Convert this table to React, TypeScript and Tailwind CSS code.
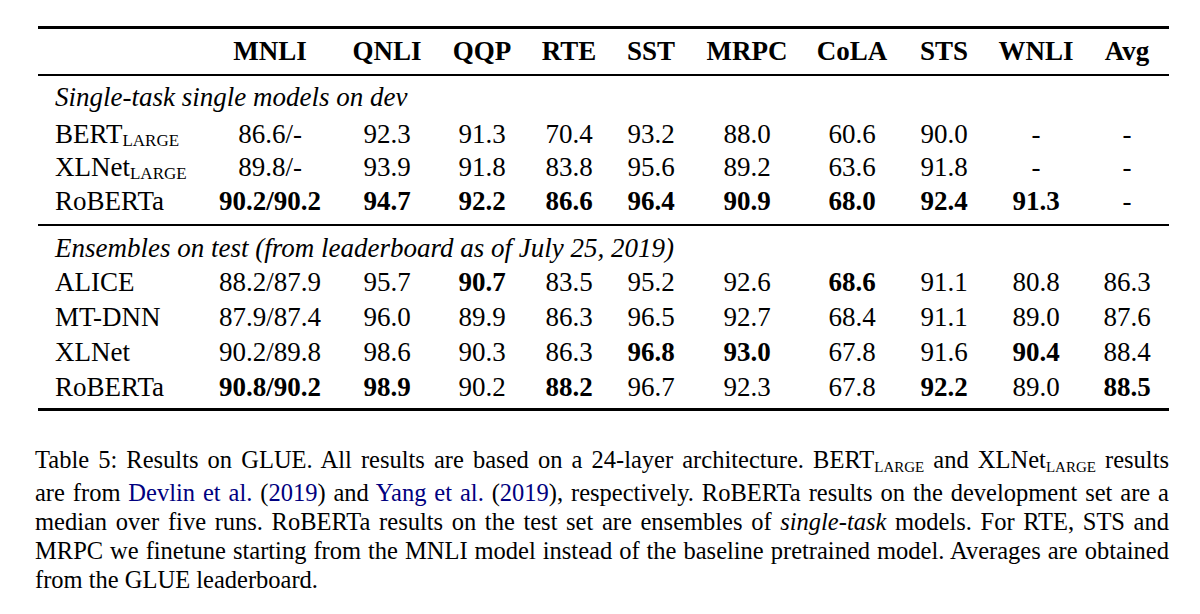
const headers = ["MNLI", "QNLI", "QQP", "RTE", "SST", "MRPC", "CoLA", "STS", "WNLI", "Avg"];

// "*" marks a bold (best) score
const devRows = [
  { name: "BERT", sub: "LARGE", h: "h-[32px] leading-[32px]", cells: ["86.6/-", "92.3", "91.3", "70.4", "93.2", "88.0", "60.6", "90.0", "-", "-"] },
  { name: "XLNet", sub: "LARGE", h: "h-[34px] leading-[34px]", cells: ["89.8/-", "93.9", "91.8", "83.8", "95.6", "89.2", "63.6", "91.8", "-", "-"] },
  { name: "RoBERTa", h: "h-[34px] leading-[34px]", cells: ["*90.2/90.2", "*94.7", "*92.2", "*86.6", "*96.4", "*90.9", "*68.0", "*92.4", "*91.3", "-"] },
];

const testRows = [
  { name: "ALICE", h: "h-[35px] leading-[35px]", cells: ["88.2/87.9", "95.7", "*90.7", "83.5", "95.2", "92.6", "*68.6", "91.1", "80.8", "86.3"] },
  { name: "MT-DNN", h: "h-[35px] leading-[35px]", cells: ["87.9/87.4", "96.0", "89.9", "86.3", "96.5", "92.7", "68.4", "91.1", "89.0", "87.6"] },
  { name: "XLNet", h: "h-[35px] leading-[35px]", cells: ["90.2/89.8", "98.6", "90.3", "86.3", "*96.8", "*93.0", "67.8", "91.6", "*90.4", "88.4"] },
  { name: "RoBERTa", h: "h-[34px] leading-[34px]", cells: ["*90.8/90.2", "*98.9", "90.2", "*88.2", "96.7", "92.3", "67.8", "*92.2", "89.0", "*88.5"] },
];

const cols = "grid grid-cols-[165px_134px_100px_90px_84px_80px_112px_98px_86px_98px_84px]";

type Row = { name: string; sub?: string; h: string; cells: string[] };

function ResultRow({ row }: { row: Row }) {
  return (
    <div className={`${cols} ${row.h}`}>
      <div className="pl-[17px] whitespace-nowrap">
        {row.name}
        {row.sub && <span className="relative top-[3px] text-[17px]">{row.sub}</span>}
      </div>
      {row.cells.map((c, i) => (
        <div key={i} className={`text-center ${c.startsWith("*") ? "font-bold" : ""}`}>
          {c.replace("*", "")}
        </div>
      ))}
    </div>
  );
}

function Cite({ who }: { who: string }) {
  return (
    <>
      <span className="text-[#000080]">{who}</span> (<span className="text-[#000080]">2019</span>)
    </>
  );
}

function Large() {
  return <span className="relative top-[4px] text-[15px]">LARGE</span>;
}

export default function App() {
  const line = "text-justify [text-align-last:justify] whitespace-nowrap";
  return (
    <div className="w-[1200px] h-[614px] bg-white text-black font-['Liberation_Serif',serif] overflow-hidden">
      <div className="pl-[38px] pt-[26px]">
        <div className="w-[1131px] text-[27px]">
          {/* header */}
          <div className="border-t-[3px] border-b-2 border-black pt-[5px] pb-[6px]">
            <div className={`${cols} h-[34px] leading-[34px] font-bold`}>
              <div />
              {headers.map((h) => (
                <div key={h} className="text-center">{h}</div>
              ))}
            </div>
          </div>

          {/* dev set */}
          <div className="border-b-2 border-black pb-[6px]">
            <div className="h-[42px] leading-[42px] pl-[17px] italic">Single-task single models on dev</div>
            {devRows.map((r) => (
              <ResultRow key={r.name} row={r} />
            ))}
          </div>

          {/* test set */}
          <div className="border-b-[3px] border-black pt-[5px] pb-[4px]">
            <div className="h-[34px] leading-[34px] pl-[17px] italic">
              Ensembles on test (from leaderboard as of July 25, 2019)
            </div>
            {testRows.map((r) => (
              <ResultRow key={r.name} row={r} />
            ))}
          </div>
        </div>
      </div>

      {/* caption */}
      <div className="pl-[35px] mt-[34px] w-[1169px] text-[24.5px] leading-[29px]">
        <div className={line}>
          Table 5: Results on GLUE. All results are based on a 24-layer architecture. BERT<Large /> and XLNet<Large /> results
        </div>
        <div className={line}>
          are from <Cite who="Devlin et al." /> and <Cite who="Yang et al." />, respectively. RoBERTa results on the development set are a
        </div>
        <div className={line}>
          median over five runs. RoBERTa results on the test set are ensembles of <i>single-task</i> models. For RTE, STS and
        </div>
        <div className={line}>
          MRPC we finetune starting from the MNLI model instead of the baseline pretrained model. Averages are obtained
        </div>
        <div className="whitespace-nowrap">from the GLUE leaderboard.</div>
      </div>
    </div>
  );
}
